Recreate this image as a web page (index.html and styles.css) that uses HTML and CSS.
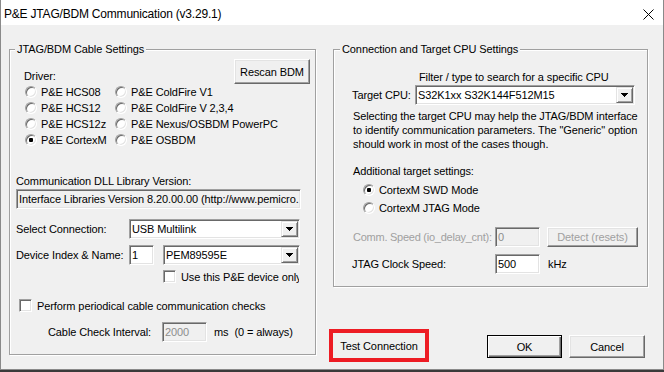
FILE: index.html
```html
<!DOCTYPE html>
<html>
<head>
<meta charset="utf-8">
<title>P&amp;E JTAG/BDM Communication</title>
<link rel="stylesheet" href="styles.css">
</head>
<body>
<div class="window">
  <div class="titlebar">
    <span class="title">P&amp;E JTAG/BDM Communication (v3.29.1)</span>
    <svg class="close" width="11" height="11" viewBox="0 0 11 11"><path d="M0.5 0.5L10.5 10.5M10.5 0.5L0.5 10.5" stroke="#000" stroke-width="1" fill="none"/></svg>
  </div>
  <div class="client">
    <div class="group left-group">
      <div class="legend lg-legend">JTAG/BDM Cable Settings</div>
      <div class="driver-row">
        <span class="driver-label">Driver:</span>
        <div class="btn rescan">Rescan BDM</div>
      </div>
      <div class="radio-grid">
        <div class="opt"><span class="radio"></span><span>P&amp;E HCS08</span></div>
        <div class="opt"><span class="radio"></span><span>P&amp;E ColdFire V1</span></div>
        <div class="opt"><span class="radio"></span><span>P&amp;E HCS12</span></div>
        <div class="opt"><span class="radio"></span><span>P&amp;E ColdFire V 2,3,4</span></div>
        <div class="opt"><span class="radio"></span><span>P&amp;E HCS12z</span></div>
        <div class="opt"><span class="radio"></span><span>P&amp;E Nexus/OSBDM PowerPC</span></div>
        <div class="opt"><span class="radio on"></span><span>P&amp;E CortexM</span></div>
        <div class="opt"><span class="radio"></span><span>P&amp;E OSBDM</span></div>
      </div>
      <div class="text dll-label">Communication DLL Library Version:</div>
      <div class="edit readonly dll-box">Interface Libraries Version 8.20.00.00 (http://www.pemicro.</div>
      <div class="row conn-row">
        <span class="row-label">Select Connection:</span>
        <div class="combo conn-combo"><span class="combo-text">USB Multilink</span><span class="combo-btn"><svg width="7" height="4" viewBox="0 0 7 4"><rect x="0" y="0" width="7" height="1"/><rect x="1" y="1" width="5" height="1"/><rect x="2" y="2" width="3" height="1"/><rect x="3" y="3" width="1" height="1"/></svg></span></div>
      </div>
      <div class="row dev-row">
        <span class="row-label">Device Index &amp; Name:</span>
        <div class="edit idx">1</div>
        <div class="combo name-combo"><span class="combo-text">PEM89595E</span><span class="combo-btn"><svg width="7" height="4" viewBox="0 0 7 4"><rect x="0" y="0" width="7" height="1"/><rect x="1" y="1" width="5" height="1"/><rect x="2" y="2" width="3" height="1"/><rect x="3" y="3" width="1" height="1"/></svg></span></div>
      </div>
      <div class="row chk-row only-row"><span class="check"></span><span>Use this P&amp;E device only</span></div>
      <div class="row chk-row periodic-row"><span class="check"></span><span>Perform periodical cable communication checks</span></div>
      <div class="row interval-row">
        <span class="interval-label">Cable Check Interval:</span>
        <div class="edit disabled small-edit">2000</div>
        <span class="unit">ms&nbsp; (0 = always)</span>
      </div>
    </div>
    <div class="right-col">
      <div class="group right-group">
        <div class="legend rg-legend">Connection and Target CPU Settings</div>
        <div class="text filter">Filter / type to search for a specific CPU</div>
        <div class="row target-row">
          <span class="target-label">Target CPU:</span>
          <div class="combo target-combo"><span class="combo-text">S32K1xx S32K144F512M15</span><span class="combo-btn"><svg width="7" height="4" viewBox="0 0 7 4"><rect x="0" y="0" width="7" height="1"/><rect x="1" y="1" width="5" height="1"/><rect x="2" y="2" width="3" height="1"/><rect x="3" y="3" width="1" height="1"/></svg></span></div>
        </div>
        <p class="para">Selecting the target CPU may help the JTAG/BDM interface<br>to identify communication parameters. The "Generic" option<br>should work in most of the cases though.</p>
        <div class="text additional">Additional target settings:</div>
        <div class="mode-list">
          <div class="opt mode"><span class="radio on"></span><span>CortexM SWD Mode</span></div>
          <div class="opt mode"><span class="radio"></span><span>CortexM JTAG Mode</span></div>
        </div>
        <div class="row comm-row">
          <span class="comm-label dim">Comm. Speed (io_delay_cnt):</span>
          <div class="edit disabled small-edit">0</div>
          <div class="btn detect dim">Detect (resets)</div>
        </div>
        <div class="row jtag-row">
          <span class="jtag-label">JTAG Clock Speed:</span>
          <div class="edit small-edit">500</div>
          <span class="khz">kHz</span>
        </div>
      </div>
      <div class="button-row">
        <div class="test-frame">Test Connection</div>
        <div class="btn default ok">OK</div>
        <div class="btn cancel">Cancel</div>
      </div>
    </div>
  </div>
</div>
</body>
</html>
```
FILE: styles.css
```css
* { box-sizing: border-box; }
html, body { margin: 0; padding: 0; }
body {
  width: 664px;
  height: 372px;
  overflow: hidden;
  background: #3a3a3a;
  font-family: "Liberation Sans", Arial, sans-serif;
  font-size: 11px;
  letter-spacing: -0.1px;
  color: #000;
}
.window {
  width: 664px;
  height: 370px;
  background: #f0f0f0;
  border: 1px solid #8a8a8a;
  border-top: 0;
  display: flex;
  flex-direction: column;
}
.titlebar {
  height: 25px;
  flex: none;
  background: #fff;
  display: flex;
  align-items: flex-start;
  justify-content: space-between;
}
.title {
  font-size: 12px;
  letter-spacing: -0.2px;
  line-height: 16px;
  margin: 6px 0 0 3px;
}
.close { margin: 9px 9px 0 0; }
.client {
  display: flex;
  gap: 17px;
  padding: 24px 0 0 8px;
}
.group {
  border: 1px solid #a0a0a0;
  box-shadow: inset 1px 1px 0 #fff, 1px 1px 0 #fff;
}
.legend {
  width: max-content;
  height: 13px;
  line-height: 13px;
  margin-top: -7px;
  padding: 0 2px;
  background: #f0f0f0;
}
.text { line-height: 13px; white-space: nowrap; }
.row { display: flex; align-items: center; white-space: nowrap; }

/* left group */
.left-group {
  width: 307px;
  height: 306px;
  flex: none;
  padding: 0 5px 0 6px;
}
.lg-legend { margin-left: -1px; }
.driver-row {
  display: flex;
  justify-content: space-between;
  align-items: flex-start;
  height: 25px;
  margin-top: 3px;
}
.driver-label { line-height: 13px; margin: 11px 0 0 8px; }
.rescan { width: 76px; height: 25px; }
.radio-grid {
  display: grid;
  grid-template-columns: 90px auto;
  grid-auto-rows: 16px;
  margin-left: 9px;
}
.opt { display: flex; align-items: center; gap: 4px; white-space: nowrap; }
.dll-label { margin-top: 27px; }
.dll-box { margin-top: 1px; width: 285px; height: 21px; padding-left: 2px; }
.conn-row { margin-top: 10px; height: 20px; }
.row-label { width: 113px; flex: none; }
.conn-combo { width: 171px; }
.dev-row { margin-top: 6px; height: 20px; }
.idx { width: 25px; }
.name-combo { width: 137px; margin-left: 9px; }
.chk-row { gap: 5px; height: 13px; }
.only-row { margin: 5px 0 0 147px; width: 136px; overflow: hidden; }
.periodic-row { margin: 16px 0 0 3px; }
.interval-row { margin-top: 10px; height: 20px; }
.interval-label { margin-left: 32px; width: 114px; flex: none; }
.small-edit { width: 45px; }
.unit { margin-left: 7px; }

/* right column */
.right-col { width: 315px; flex: none; display: flex; flex-direction: column; }
.right-group { height: 238px; padding-left: 19px; }
.rg-legend { margin-left: -13px; }
.filter { margin: 15px 0 0 66px; }
.target-row { margin-top: 1px; height: 20px; }
.target-label { width: 63px; margin-left: -1px; flex: none; }
.target-combo { width: 220px; }
.para { margin: 4px 0 0; line-height: 14px; white-space: nowrap; }
.additional { margin-top: 14px; }
.mode-list { margin: 3px 0 0 10px; display: flex; flex-direction: column; }
.mode { height: 18px; }
.comm-row { margin-top: 10px; height: 20px; }
.comm-label { width: 142px; flex: none; letter-spacing: -0.25px; }
.dim { color: #a0a0a0; }
.detect { width: 91px; height: 20px; margin-left: 7px; }
.jtag-row { margin-top: 7px; height: 20px; }
.jtag-label { width: 143px; margin-left: -1px; flex: none; }
.khz { margin-left: 8px; }

.button-row { display: flex; align-items: flex-start; margin-top: 42px; }
.test-frame {
  width: 100px;
  height: 33px;
  margin-left: -4px;
  border: 4px solid #ed1c24;
  background: #f0f0f0;
  display: flex;
  align-items: center;
  justify-content: center;
  white-space: nowrap;
}
.ok { width: 75px; height: 23px; margin: 6px 0 0 58px; }
.cancel { width: 76px; height: 23px; margin: 6px 0 0 7px; }

/* controls */
.btn {
  background: #f0f0f0;
  border: 1px solid;
  border-color: #fff #696969 #696969 #fff;
  box-shadow: inset -1px -1px 0 #a0a0a0, inset 1px 1px 0 #e3e3e3;
  display: flex;
  align-items: center;
  justify-content: center;
  white-space: nowrap;
}
.btn.default {
  border-color: #000;
  box-shadow: inset 1px 1px 0 #fff, inset -1px -1px 0 #696969, inset -2px -2px 0 #a0a0a0;
}
.edit {
  height: 20px;
  flex: none;
  background: #fff;
  border: 1px solid;
  border-color: #a0a0a0 #fff #fff #a0a0a0;
  box-shadow: inset 1px 1px 0 #696969, inset -1px -1px 0 #e3e3e3;
  padding-left: 2px;
  display: flex;
  align-items: center;
  white-space: nowrap;
  overflow: hidden;
}
.edit.readonly { background: #f0f0f0; }
.edit.disabled { background: #f0f0f0; color: #8d8d8d; }
.combo {
  height: 20px;
  flex: none;
  display: flex;
  background: #fff;
  border: 1px solid;
  border-color: #a0a0a0 #fff #fff #a0a0a0;
  box-shadow: inset 1px 1px 0 #696969, inset -1px -1px 0 #e3e3e3;
  padding: 1px;
}
.combo-text {
  flex: 1;
  display: flex;
  align-items: center;
  padding-left: 1px;
  overflow: hidden;
  white-space: nowrap;
}
.combo-btn {
  width: 17px;
  flex: none;
  background: #f0f0f0;
  border: 1px solid;
  border-color: #e3e3e3 #696969 #696969 #e3e3e3;
  box-shadow: inset 1px 1px 0 #fff, inset -1px -1px 0 #a0a0a0;
  display: flex;
  align-items: center;
  justify-content: center;
}
.combo-btn svg { fill: #000; display: block; }
.check {
  width: 13px;
  height: 13px;
  flex: none;
  background: #fff;
  border: 1px solid;
  border-color: #a0a0a0 #fff #fff #a0a0a0;
  box-shadow: inset 1px 1px 0 #696969, inset -1px -1px 0 #e3e3e3;
}
.radio {
  width: 12px;
  height: 12px;
  flex: none;
  border-radius: 50%;
  background: #fff;
  border: 1px solid;
  border-color: #a0a0a0 #fff #fff #a0a0a0;
  box-shadow: inset 1px 1px 0 #696969, inset -1px -1px 0 #e3e3e3;
  display: flex;
  align-items: center;
  justify-content: center;
}
.radio.on::after {
  content: "";
  width: 4px;
  height: 4px;
  border-radius: 1px;
  background: #000;
}
```
